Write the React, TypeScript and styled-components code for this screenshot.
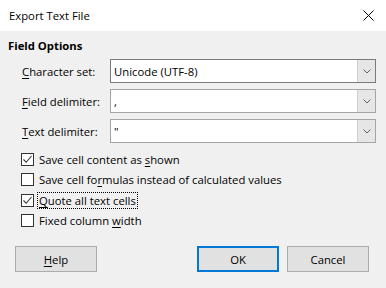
import React from "react";
import styled, { createGlobalStyle } from "styled-components";

const Global = createGlobalStyle`
  html, body {
    margin: 0;
    padding: 0;
    background: #f0f0f0;
  }
  body {
    font-family: "Open Sans", "Noto Sans", "Liberation Sans", sans-serif;
    font-size: 11.3px;
    color: #000;
  }
`;

const Dialog = styled.div`
  width: 386px;
  height: 288px;
  display: flex;
  flex-direction: column;
  background: #f0f0f0;
  overflow: hidden;
`;

const TitleBar = styled.div`
  height: 31px;
  flex: none;
  display: flex;
  align-items: center;
  justify-content: space-between;
  padding: 0 12px 0 9px;
  background: #ffffff;
`;

const CloseIcon = styled.svg`
  width: 11px;
  height: 11px;
`;

const Body = styled.div`
  flex: 1;
  display: flex;
  flex-direction: column;
  padding: 7px 10px 0 8px;
`;

const SectionTitle = styled.div`
  font-weight: 700;
  line-height: 16px;
  height: 16px;
`;

const FieldGrid = styled.div`
  display: grid;
  grid-template-columns: 88px 1fr;
  row-gap: 6px;
  margin: 5px 0 0 14px;
  align-items: center;
`;

const Label = styled.label`
  white-space: nowrap;
`;

const Combo = styled.div<{ $focused?: boolean }>`
  height: 24px;
  display: flex;
  align-items: stretch;
  background: #ffffff;
  border: 1px solid ${(p) => (p.$focused ? "#7a7a7a" : "#a4a4a4")};
  box-sizing: border-box;
`;

const ComboValue = styled.div`
  flex: 1;
  display: flex;
  align-items: center;
  padding-left: 3px;
  white-space: nowrap;
`;

const ComboButton = styled.div`
  width: 17px;
  flex: none;
  display: flex;
  align-items: center;
  justify-content: center;
  background: #e6e6e6;
  border-left: 1px solid #cfcfcf;
`;

const ChecksList = styled.div`
  display: flex;
  flex-direction: column;
  margin: 6px 0 0 13px;
`;

const CheckRow = styled.div`
  height: 20.5px;
  display: flex;
  align-items: center;
  gap: 4px;
`;

const Box = styled.span`
  width: 13px;
  height: 13px;
  flex: none;
  box-sizing: border-box;
  border: 1px solid #333333;
  background: #ffffff;
  display: flex;
  align-items: center;
  justify-content: center;
`;

const CheckText = styled.span<{ $focus?: boolean }>`
  white-space: nowrap;
  line-height: 15px;
  padding: 0 1px;
  outline: ${(p) => (p.$focus ? "1px dotted #000" : "none")};
`;

const Footer = styled.div`
  display: flex;
  align-items: center;
  margin: 15px 7px 0 7px;
`;

const Spacer = styled.div`
  flex: 1;
`;

const Button = styled.button<{ $default?: boolean }>`
  width: 82px;
  height: 26px;
  box-sizing: border-box;
  font-family: inherit;
  font-size: inherit;
  color: #000;
  background: #e1e1e1;
  border: ${(p) => (p.$default ? "2px solid #0078d7" : "1px solid #adadad")};
  margin-left: ${(p) => (p.$default ? "0" : "8px")};
  padding: 0;
  &:first-child {
    margin-left: 0;
  }
`;

const Key = styled.span`
  text-decoration: underline;
  text-underline-offset: 2px;
`;

const Chevron = () => (
  <svg width="8" height="5" viewBox="0 0 8 5">
    <path d="M0.5 0.5 L4 4 L7.5 0.5" fill="none" stroke="#606060" strokeWidth="1" />
  </svg>
);

const Tick = () => (
  <svg width="11" height="11" viewBox="0 0 11 11">
    <path d="M1.5 5.5 L4.2 8.3 L9.5 2" fill="none" stroke="#333" strokeWidth="1.1" />
  </svg>
);

const fields = [
  { key: "C", rest: "haracter set:", value: "Unicode (UTF-8)", focused: true },
  { key: "F", rest: "ield delimiter:", value: ",", focused: false },
  { key: "T", rest: "ext delimiter:", value: '"', focused: false },
];

const checks: { before: string; key: string; after: string; checked: boolean; focus?: boolean }[] = [
  { before: "Save cell content as ", key: "s", after: "hown", checked: true },
  { before: "Save cell fo", key: "r", after: "mulas instead of calculated values", checked: false },
  { before: "", key: "Q", after: "uote all text cells", checked: true, focus: true },
  { before: "Fixed column ", key: "w", after: "idth", checked: false },
];

export default function App() {
  return (
    <>
      <Global />
      <Dialog>
        <TitleBar>
          <span>Export Text File</span>
          <CloseIcon viewBox="0 0 11 11">
            <path d="M0.5 0.5 L10.5 10.5 M10.5 0.5 L0.5 10.5" stroke="#000" strokeWidth="1" />
          </CloseIcon>
        </TitleBar>
        <Body>
          <SectionTitle>Field Options</SectionTitle>
          <FieldGrid>
            {fields.map((f) => (
              <React.Fragment key={f.key}>
                <Label>
                  <Key>{f.key}</Key>
                  {f.rest}
                </Label>
                <Combo $focused={f.focused}>
                  <ComboValue>{f.value}</ComboValue>
                  <ComboButton>
                    <Chevron />
                  </ComboButton>
                </Combo>
              </React.Fragment>
            ))}
          </FieldGrid>
          <ChecksList>
            {checks.map((c) => (
              <CheckRow key={c.key}>
                <Box>{c.checked && <Tick />}</Box>
                <CheckText $focus={c.focus}>
                  {c.before}
                  <Key>{c.key}</Key>
                  {c.after}
                </CheckText>
              </CheckRow>
            ))}
          </ChecksList>
          <Footer>
            <Button>
              <Key>H</Key>elp
            </Button>
            <Spacer />
            <Button $default>OK</Button>
            <Button>Cancel</Button>
          </Footer>
        </Body>
      </Dialog>
    </>
  );
}
